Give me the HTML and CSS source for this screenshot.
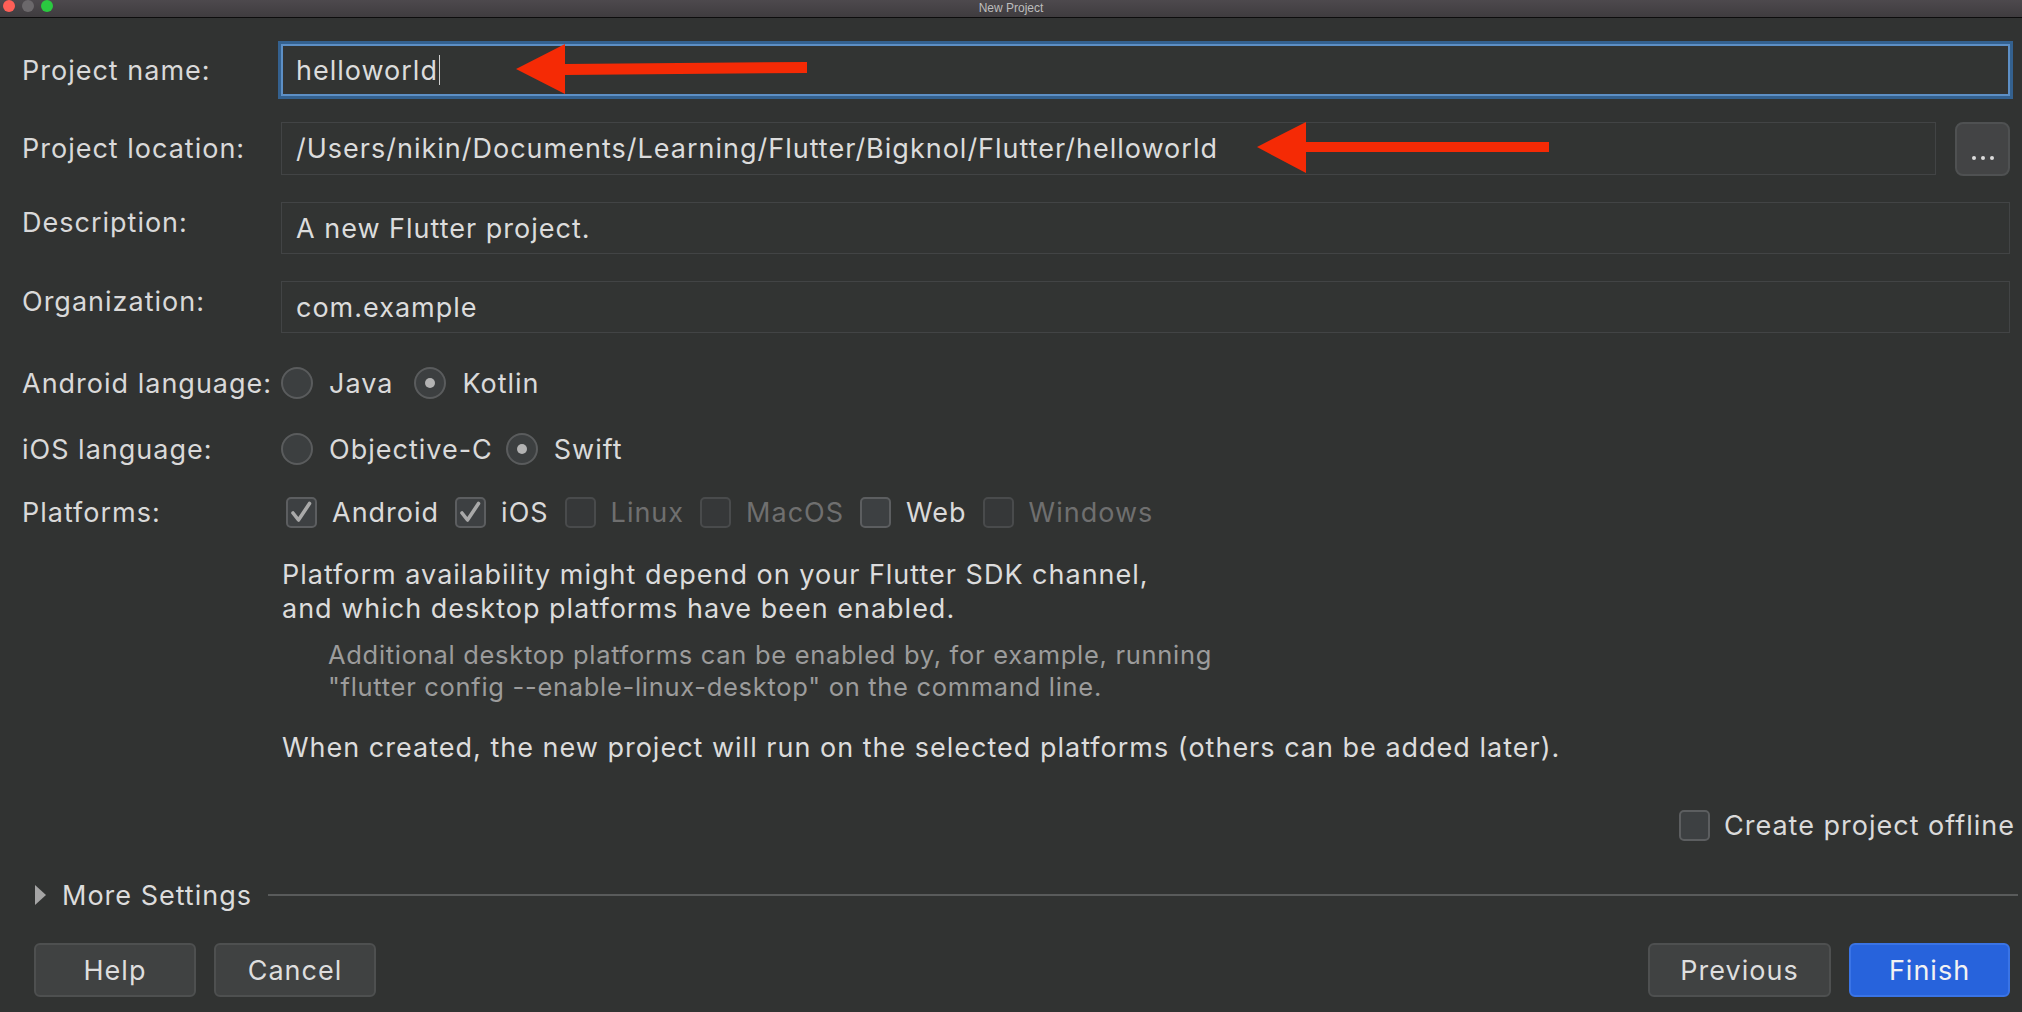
FILE: index.html
```html
<!DOCTYPE html>
<html>
<head>
<meta charset="utf-8">
<link rel="stylesheet" href="styles.css">
</head>
<body>
<div class="window">
  <div class="titlebar">
    <div class="lights"><span class="light red"></span><span class="light gray"></span><span class="light green"></span></div>
    <div class="title">New Project</div>
  </div>
  <div class="dialog">
    <div class="row r-name">
      <div class="lbl">Project name:</div>
      <div class="field focused"><span class="val">helloworld</span><span class="caret"></span></div>
    </div>
    <div class="row r-loc">
      <div class="lbl">Project location:</div>
      <div class="field loc"><span class="val">/Users/nikin/Documents/Learning/Flutter/Bigknol/Flutter/helloworld</span></div>
      <div class="browse"><span></span><span></span><span></span></div>
    </div>
    <div class="row r-desc">
      <div class="lbl up">Description:</div>
      <div class="field"><span class="val">A new Flutter project.</span></div>
    </div>
    <div class="row r-org">
      <div class="lbl up">Organization:</div>
      <div class="field"><span class="val">com.example</span></div>
    </div>
    <div class="row opts r-android">
      <div class="lbl">Android language:</div>
      <div class="choice java"><span class="radio"></span>Java</div>
      <div class="choice"><span class="radio on"></span>Kotlin</div>
    </div>
    <div class="row opts r-ios">
      <div class="lbl">iOS language:</div>
      <div class="choice objc"><span class="radio"></span>Objective-C</div>
      <div class="choice"><span class="radio on"></span>Swift</div>
    </div>
    <div class="row opts r-plat">
      <div class="lbl">Platforms:</div>
      <div class="plats">
        <div class="check"><span class="box on"><svg viewBox="0 0 31 31"><path d="M7 16 L12.5 23 L23.5 6.5"/></svg></span>Android</div>
        <div class="check"><span class="box on"><svg viewBox="0 0 31 31"><path d="M7 16 L12.5 23 L23.5 6.5"/></svg></span>iOS</div>
        <div class="check dis"><span class="box"></span>Linux</div>
        <div class="check dis"><span class="box"></span>MacOS</div>
        <div class="check"><span class="box"></span>Web</div>
        <div class="check dis"><span class="box"></span>Windows</div>
      </div>
    </div>
    <div class="notes">
      <p class="note">Platform availability might depend on your Flutter SDK channel,<br>and which desktop platforms have been enabled.</p>
      <p class="hint">Additional desktop platforms can be enabled by, for example, running<br>"flutter config --enable-linux-desktop" on the command line.</p>
      <p class="note created">When created, the new project will run on the selected platforms (others can be added later).</p>
    </div>
    <div class="offline">
      <div class="check"><span class="box"></span>Create project offline</div>
    </div>
    <div class="more">
      <span class="tri"></span><span class="more-text">More Settings</span><span class="rule"></span>
    </div>
    <div class="buttons">
      <div class="btn">Help</div>
      <div class="btn">Cancel</div>
      <div class="spacer"></div>
      <div class="btn prev">Previous</div>
      <div class="btn primary">Finish</div>
    </div>
  </div>
  <svg class="arrow a1" width="300" height="60" viewBox="0 0 300 60"><polygon points="0,27 49,2 49,22 291,20 291,31 49,33 49,52" /></svg>
  <svg class="arrow a2" width="300" height="60" viewBox="0 0 300 60"><polygon points="0,26 49,1 49,21 292,21 292,31 49,31 49,52" /></svg>
</div>
</body>
</html>
```

FILE: styles.css
```css
* { box-sizing: border-box; }
html, body { margin: 0; padding: 0; }
body {
  width: 2022px;
  height: 1012px;
  overflow: hidden;
  background: #313332;
  font-family: "Inter", "Noto Sans", sans-serif;
  color: #d9d9d9;
}
.window { position: relative; width: 2022px; height: 1012px; }

.titlebar {
  position: relative;
  height: 18px;
  background: linear-gradient(#4d494d, #3f3c3f);
  border-bottom: 1px solid #0d0d0d;
  display: flex;
  align-items: flex-start;
  justify-content: center;
}
.lights { position: absolute; left: 3px; top: 0; display: flex; gap: 7px; }
.light { width: 12px; height: 12px; border-radius: 50%; }
.light.red { background: #fe5f57; }
.light.gray { background: #6b686b; }
.light.green { background: #2ac940; }
.title { font-size: 12px; color: #bdbdbd; line-height: 16px; font-family: "Liberation Sans", sans-serif; }

.dialog { padding: 0 12px 0 22px; font-size: 27px; letter-spacing: 1px; }

.row { display: flex; align-items: center; }
.lbl { width: 259px; flex: none; white-space: nowrap; }
.lbl.up { position: relative; top: -6px; }

.field {
  flex: 1;
  height: 52px;
  border: 1px solid #424445;
  background: #323433;
  display: flex;
  align-items: center;
  padding-left: 14px;
  color: #dcdcdc;
}
.field.focused {
  border: 2px solid #5d8fc5;
  box-shadow: 0 0 0 3px #34618f;
  padding-left: 13px;
}
.caret { width: 1px; height: 30px; background: #cfcfcf; margin-left: 1px; }

.r-name { margin-top: 26px; }
.r-loc { margin-top: 26px; height: 53px; }
.r-loc .field { height: 53px; }
.r-desc { margin-top: 27px; }
.r-org { margin-top: 27px; }

.browse {
  width: 55px;
  height: 54px;
  margin-left: 19px;
  border: 2px solid #4f5152;
  border-radius: 8px;
  background: #434445;
  display: flex;
  align-items: center;
  justify-content: center;
  gap: 5px;
  padding-top: 18px;
}
.browse span { width: 4px; height: 4px; border-radius: 50%; background: #dcdcdc; }

.opts { height: 40px; }
.r-android { margin-top: 30px; }
.r-ios { margin-top: 26px; }
.r-plat { margin-top: 23px; }

.choice { display: flex; align-items: center; color: #dadada; }
.radio {
  width: 32px; height: 32px; border-radius: 50%;
  border: 2px solid #5a5c5d;
  background: #3c3f40;
  margin-right: 16px;
  display: flex; align-items: center; justify-content: center;
}
.radio.on::after { content: ""; width: 10px; height: 10px; border-radius: 50%; background: #b3b3b3; }
.java { margin-right: 21px; }
.objc { margin-right: 13px; }

.plats { display: flex; align-items: center; gap: 16px; margin-left: 5px; }
.check { display: flex; align-items: center; color: #dadada; }
.check.dis { color: #6f6f6f; }
.box {
  width: 31px; height: 31px; border-radius: 5px;
  border: 2px solid #5c5e60;
  background: #3d4042;
  margin-right: 15px;
  display: flex; align-items: center; justify-content: center;
}
.box svg { width: 31px; height: 31px; flex: none; }
.box svg path { fill: none; stroke: #a9a9a9; stroke-width: 3.6; stroke-linecap: round; stroke-linejoin: round; }
.check.dis .box { border-color: #494b4c; background: #363839; }

.notes { padding-left: 260px; margin-top: 26px; }
.notes p { margin: 0; }
.note { line-height: 34px; color: #dcdcdc; }
.hint { line-height: 32px; color: #9c9c9c; font-size: 25.5px; letter-spacing: 0.7px; padding-left: 46px; margin-top: 13px !important; }
.created { margin-top: 28px !important; }

.offline { display: flex; justify-content: flex-end; margin-top: 40px; height: 40px; align-items: center; margin-right: -5px; }
.offline .box { margin-right: 14px; }

.more { display: flex; align-items: center; height: 40px; margin-top: 30px; margin-right: -8px; }
.tri {
  width: 0; height: 0; margin-left: 13px; margin-right: 16px;
  border-top: 10px solid transparent; border-bottom: 10px solid transparent;
  border-left: 11px solid #a5a5a5;
}
.more-text { color: #dcdcdc; }
.rule { flex: 1; height: 2px; background: #595b5b; margin-left: 16px; }

.buttons { display: flex; margin-top: 28px; padding-left: 12px; gap: 18px; }
.spacer { flex: 1; }
.btn {
  height: 54px;
  min-width: 162px;
  padding: 0 20px;
  border: 2px solid #4e5050;
  border-radius: 6px;
  background: #404242;
  display: flex; align-items: center; justify-content: center;
  color: #dedede;
}
.btn.prev { min-width: 183px; }
.btn.primary { background: #2763dc; border-color: #3a74e6; color: #f2f2f2; min-width: 161px; }

.arrow { position: absolute; }
.arrow polygon { fill: #f52a05; }
.a1 { left: 516px; top: 42px; }
.a2 { left: 1257px; top: 121px; }
```
